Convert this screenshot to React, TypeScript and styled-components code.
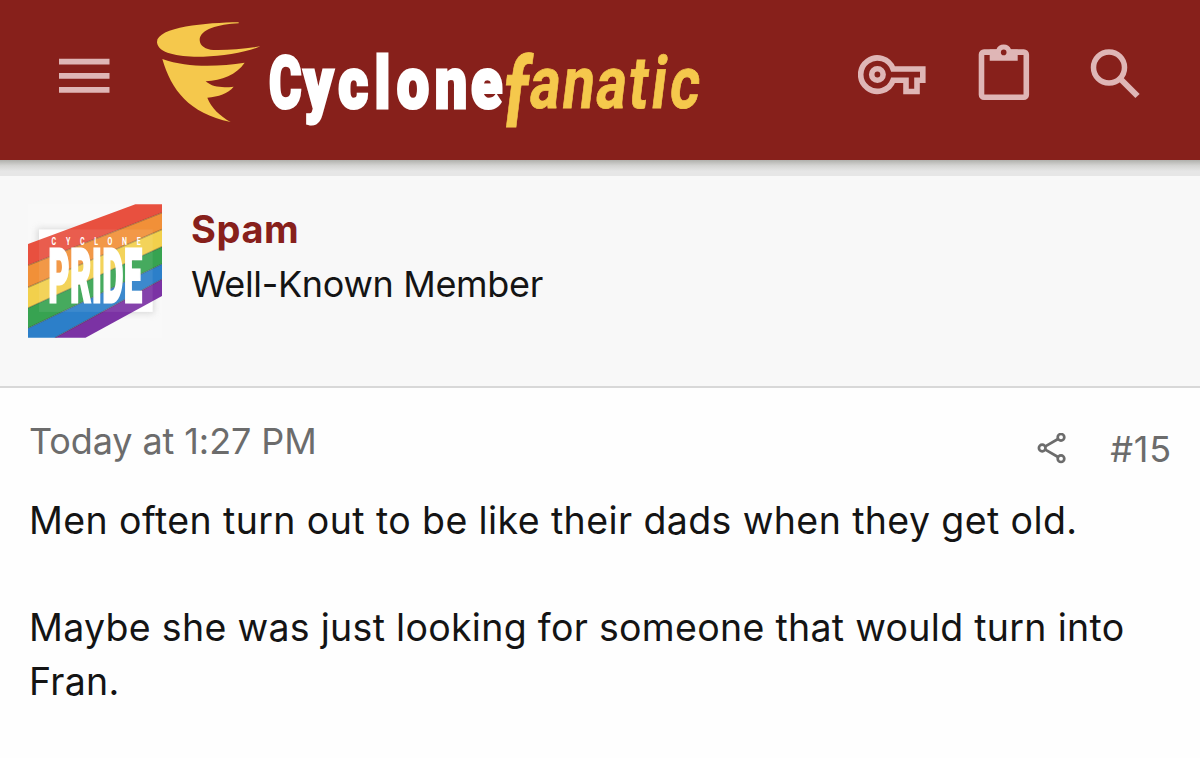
import styled, { createGlobalStyle } from "styled-components";

interface TextProps {
  $spacing?: string;
}

interface WordProps {
  $weight: number;
  $size?: number;
}

const GlobalStyle = createGlobalStyle`
  * {
    box-sizing: border-box;
  }

  body {
    margin: 0;
    background: #fefefe;
    color: #141414;
    font-family: Inter, "Liberation Sans", sans-serif;
  }
`;

const Page = styled.div`
  min-height: 758px;
  overflow: hidden;
`;

const Header = styled.header`
  display: flex;
  align-items: center;
  height: 160px;
  padding: 0 60px 10px 59px;
  background: #87201b;
  color: #dfb6b6;
`;

const HeaderIcons = styled.nav`
  display: flex;
  align-items: center;
  margin-left: auto;
`;

const Icon = styled.svg<{ $gap?: number }>`
  display: block;
  flex: none;
  margin-right: ${(props) => props.$gap || 0}px;
  fill: none;
  stroke: currentColor;
`;

const Logo = styled.svg`
  display: block;
  margin-left: 40px;
  overflow: visible;
`;

const LogoWord = styled.text<WordProps>`
  font-family: Roboto, sans-serif;
  font-size: ${(props) => props.$size || 73}px;
  font-weight: ${(props) => props.$weight};
`;

const Strip = styled.div`
  height: 16px;
  background: linear-gradient(#b0b0ac, #d4d4d2 35%, #e6e6e6 70%);
`;

const UserPanel = styled.section`
  display: flex;
  gap: 29px;
  height: 212px;
  padding: 28px;
  background: #f8f8f8;
  border-bottom: 2px solid #d8d8d8;
`;

const Avatar = styled.svg`
  display: block;
  flex: none;
  width: 134px;
  height: 134px;
`;

const UserName = styled.h4`
  margin: 0;
  color: #87201b;
  font-size: 38px;
  font-weight: 700;
  line-height: 50px;
  letter-spacing: 0.6px;
`;

const UserTitle = styled.div`
  font-size: 36px;
  line-height: 60px;
  letter-spacing: -0.33px;
`;

const Post = styled.article`
  padding: 26px 29px 0;
`;

const PostMeta = styled.div`
  display: flex;
  justify-content: space-between;
  height: 80px;
  color: #6c6c6c;
  font-size: 36px;
  line-height: 54px;
`;

const PostDate = styled.time`
  letter-spacing: -0.1px;
`;

const PostActions = styled.div`
  display: flex;
  align-items: center;
  height: 54px;
  margin-top: 8px;
`;

const PostNumber = styled.span`
  letter-spacing: 0.8px;
  margin-right: -1px;
`;

const PostBody = styled.p<TextProps>`
  margin: 0 0 53px;
  font-size: 37.5px;
  line-height: 54px;
  letter-spacing: ${(props) => props.$spacing || "0"};
  white-space: nowrap;
`;

const stripes = [
  { color: "#e8503f", points: "39,162 362,42 442,42 442,68 39,226" },
  { color: "#f19038", points: "39,226 442,68 442,118 39,292" },
  { color: "#f2d04c", points: "39,292 442,118 442,170 39,354" },
  { color: "#37a351", points: "39,354 442,170 442,222 39,415" },
  { color: "#2c7fc9", points: "39,415 442,222 442,268 120,444 39,444" },
  { color: "#7b32a4", points: "120,444 442,268 442,318 212,444" },
];

function CycloneLogo() {
  return (
    <Logo width="560" height="150" viewBox="150 0 560 150">
      <g fill="#f5c84c" transform="translate(140 10) scale(0.3333)">
        <path d="M296 37 C200 38 50 51 51 97 C54 133 126 142 190 140 C250 138 322 126 361 109 C310 118 260 121 220 120 C197 118 180 109 179 90 C180 58 234 43 296 40 Z" />
        <path d="M67 147 C144 174 235 170 314 158 C290 194 245 211 197 214 C219 234 252 233 281 230 C264 251 235 260 202 263 C214 294 239 317 272 336 C146 309 94 240 67 147 Z" />
      </g>
      <g fill="#fff" stroke="#fff" strokeWidth="3">
        <LogoWord $weight={900} transform="translate(269 108) scale(0.68 1)">
          C
        </LogoWord>
        <LogoWord
          $weight={900}
          transform="translate(303.5 108) scale(0.79 1)"
          x="0 44 90 118 166 212"
        >
          yclone
        </LogoWord>
      </g>
      <g fill="#f5c84c" stroke="#f5c84c" strokeWidth="0.8">
        <LogoWord
          $weight={700}
          $size={98}
          transform="translate(500 127) skewX(-7) scale(0.7 1)"
        >
          f
        </LogoWord>
        <LogoWord
          $weight={700}
          transform="translate(522 108) skewX(-7) scale(0.78 1)"
          x="7 49 92 134 163 187"
        >
          anatic
        </LogoWord>
      </g>
    </Logo>
  );
}

function PrideAvatar() {
  return (
    <Avatar viewBox="39 42 403 402">
      <defs>
        <filter id="soft" x="-20%" y="-20%" width="140%" height="140%">
          <feGaussianBlur stdDeviation="9" />
        </filter>
      </defs>
      <rect x="39" y="42" width="403" height="402" fill="#f9f9f9" />
      <rect x="66" y="115" width="352" height="256" fill="#ccc" opacity="0.7" filter="url(#soft)" />
      <rect x="72" y="118" width="342" height="248" fill="#fff" />
      {stripes.map((stripe) => (
        <polygon key={stripe.color} points={stripe.points} fill={stripe.color} />
      ))}
      <path
        d="M39 226L442 68M39 292L442 118M39 354L442 170M39 415L442 222M120 444L442 268"
        stroke="#432"
        strokeOpacity="0.35"
        strokeWidth="4"
      />
      <rect x="72" y="118" width="342" height="248" fill="#fff" opacity="0.08" />
      <g fill="#fff" stroke="#fff" fontFamily="Roboto, sans-serif">
        <text
          transform="translate(110 165) scale(0.68 1)"
          fontSize="31"
          fontWeight="700"
          textLength="394"
          strokeWidth="0"
        >
          CYCLONE
        </text>
        <text
          transform="translate(101 336) scale(0.435 1)"
          fontSize="222"
          fontWeight="900"
          textLength="646"
          strokeWidth="9"
        >
          PRIDE
        </text>
      </g>
    </Avatar>
  );
}

function App() {
  return (
    <Page>
      <GlobalStyle />
      <Header>
        <Icon width="51" height="36" viewBox="59 57 51 36" strokeWidth="5.8">
          <path d="M59 61.7h50.5M59 75.8h50.5M59 89.9h50.5" />
        </Icon>
        <CycloneLogo />
        <HeaderIcons>
          <Icon $gap={52} width="68" height="60" viewBox="858 45 68 60" strokeWidth="5.6">
            <path d="M893.1 69H922.8V80.2H917V91.5H906V80.2H893.1A16.7 16.7 0 1 1 893.1 69Z" />
            <circle cx="877.4" cy="74.5" r="5.7" />
          </Icon>
          <Icon $gap={60} width="52" height="62" viewBox="978 44 52 62" strokeWidth="5.6">
            <rect x="981.5" y="52.1" width="44.8" height="45.2" rx="2.5" />
            <path
              d="M989.7 49.5H996.3A8 8 0 0 1 1011.1 49.5H1017.7V60.7H989.7Z"
              fill="currentColor"
              stroke="none"
            />
            <circle cx="1003.7" cy="52.4" r="2.8" fill="#87201b" stroke="none" />
          </Icon>
          <Icon width="50" height="60" viewBox="1090 45 50 60" strokeWidth="5.5">
            <circle cx="1109" cy="67.5" r="15.5" />
            <path d="M1120 78.5L1137.5 96" strokeWidth="6" />
          </Icon>
        </HeaderIcons>
      </Header>
      <Strip />
      <UserPanel>
        <PrideAvatar />
        <div>
          <UserName>Spam</UserName>
          <UserTitle>Well-Known Member</UserTitle>
        </div>
      </UserPanel>
      <Post>
        <PostMeta>
          <PostDate>Today at 1:27 PM</PostDate>
          <PostActions>
            <Icon $gap={43} width="30" height="32" viewBox="1037 433 30 32" strokeWidth="2.7">
              <path d="M1045.3 446.3L1058 439M1045.3 449.7L1058 457" />
              <circle cx="1061" cy="437.3" r="3.3" />
              <circle cx="1042.2" cy="448" r="3.3" />
              <circle cx="1061" cy="458.7" r="3.3" />
            </Icon>
            <PostNumber>#15</PostNumber>
          </PostActions>
        </PostMeta>
        <PostBody $spacing="0.4px">
          Men often turn out to be like their dads when they get old.
        </PostBody>
        <PostBody $spacing="0.3px">
          Maybe she was just looking for someone that would turn into
          <br />
          Fran.
        </PostBody>
      </Post>
    </Page>
  );
}

export default App;
